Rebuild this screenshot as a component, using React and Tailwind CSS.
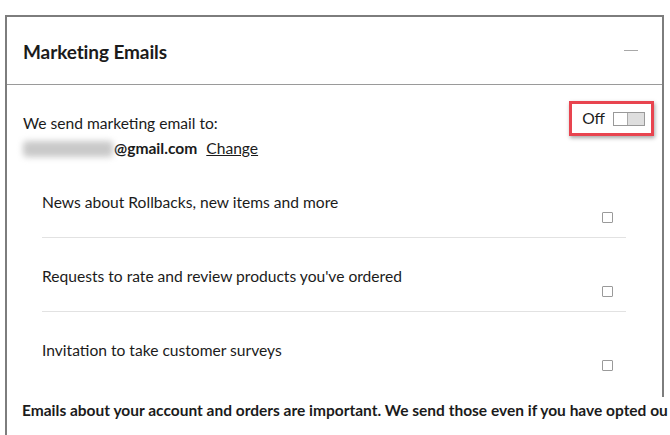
export default function App() {
  const items = [
    "News about Rollbacks, new items and more",
    "Requests to rate and review products you've ordered",
    "Invitation to take customer surveys",
  ];
  return (
    <div className="w-[670px] h-[435px] overflow-hidden bg-white pt-[15px] pl-[5px] text-[#1b1b1b]" style={{ fontFamily: "Lato, 'Noto Sans', sans-serif" }}>
      <div className="w-[659px] h-[440px] border-l-2 border-t-2 border-[#7d7d7d]">
        <div className="border-r-2 border-[#7d7d7d] h-[380px]">
          <div className="h-[68px] flex items-center justify-between pt-[3px] pl-[16px] pr-[24px] border-b border-[#9a9a9a]">
            <div className="text-[19px] font-bold tracking-[-0.1px]">Marketing Emails</div>
            <div className="w-[14px] h-[1.5px] bg-[#a8a8a8] -mt-[3px]" />
          </div>
          <div className="pt-[16px] pl-[16px] pr-[8px]">
            <div className="flex justify-between items-start">
              <div className="pt-[10px] text-[15.6px] leading-[25px]">
                <div>We send marketing email to:</div>
                <div className="flex items-center">
                  <div className="w-[90px] h-[16px] bg-[#c9c9c9] blur-[3px] rounded-sm" />
                  <span className="font-bold ml-[1px]">@gmail.com</span>
                  <span className="underline ml-[9px]">Change</span>
                </div>
              </div>
              <div className="w-[85px] h-[35px] border-[3px] border-[#e8444f] shadow-[1px_2px_4px_rgba(0,0,0,0.35)] flex items-center justify-end pr-[6px] gap-[8px]">
                <span className="text-[15.6px]">Off</span>
                <div className="w-[32px] h-[14px] border border-[#999] flex">
                  <div className="w-[14px] h-full bg-white border-r border-[#aaa]" />
                  <div className="flex-1 h-full bg-[#dedede]" />
                </div>
              </div>
            </div>
            <div className="pl-[19px] pr-[28px] pt-[31px]">
              {items.map((t, i) => (
                <div key={i} className={i < 2 ? "border-b border-[#e2e2e2] pb-[14px] mb-[28px]" : ""}>
                  <div className="text-[15.6px] leading-[20px]">{t}</div>
                  <div className="flex justify-end pr-[13px]">
                    <div className="w-[11px] h-[11px] border border-[#9a9a9a] rounded-[1px]" />
                  </div>
                </div>
              ))}
            </div>
          </div>
        </div>
        <div className="pl-[15px] pt-[3px] text-[15.5px] font-bold whitespace-nowrap leading-[20px]">
          Emails about your account and orders are important. We send those even if you have opted ou
        </div>
      </div>
    </div>
  );
}
